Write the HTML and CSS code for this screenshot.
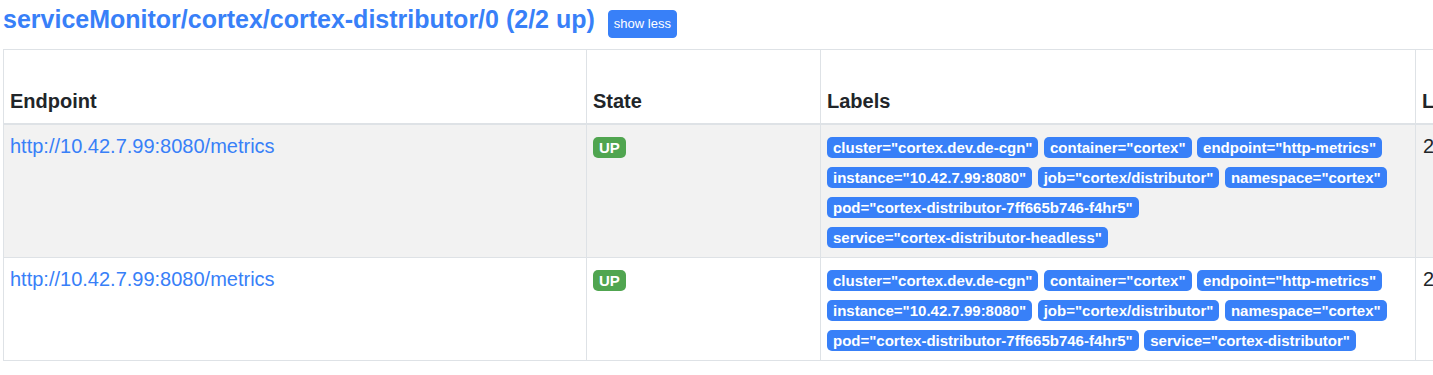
FILE: index.html
```html
<!DOCTYPE html>
<html lang="en">
<head>
    <meta charset="UTF-8">
    <meta name="viewport" content="width=device-width, initial-scale=1.0">
    <title>Targets</title>
    <link rel="stylesheet" href="styles.css">
</head>
<body>
    <div class="targets-page">
        <h2 class="pool-heading">
            <a href="#pool-cortex-distributor">serviceMonitor/cortex/cortex-distributor/0 (2/2 up)</a><button class="btn-xs" type="button">show less</button>
        </h2>
        <table class="targets-table">
            <colgroup>
                <col class="col-endpoint">
                <col class="col-state">
                <col class="col-labels">
                <col class="col-last">
                <col class="col-duration">
                <col class="col-error">
            </colgroup>
            <thead>
                <tr>
                    <th>Endpoint</th>
                    <th>State</th>
                    <th>Labels</th>
                    <th>Last Scrape</th>
                    <th>Scrape Duration</th>
                    <th>Error</th>
                </tr>
            </thead>
            <tbody>
                <tr class="striped">
                    <td><a href="#">http://10.42.7.99:8080/metrics</a></td>
                    <td><span class="badge badge-up">UP</span></td>
                    <td>
                        <span class="badge">cluster="cortex.dev.de-cgn"</span>
                        <span class="badge">container="cortex"</span>
                        <span class="badge">endpoint="http-metrics"</span>
                        <span class="badge">instance="10.42.7.99:8080"</span>
                        <span class="badge">job="cortex/distributor"</span>
                        <span class="badge">namespace="cortex"</span>
                        <span class="badge">pod="cortex-distributor-7ff665b746-f4hr5"</span>
                        <span class="badge">service="cortex-distributor-headless"</span>
                    </td>
                    <td>2.481s ago</td>
                    <td>4.512ms</td>
                    <td></td>
                </tr>
                <tr>
                    <td><a href="#">http://10.42.7.99:8080/metrics</a></td>
                    <td><span class="badge badge-up">UP</span></td>
                    <td>
                        <span class="badge">cluster="cortex.dev.de-cgn"</span>
                        <span class="badge">container="cortex"</span>
                        <span class="badge">endpoint="http-metrics"</span>
                        <span class="badge">instance="10.42.7.99:8080"</span>
                        <span class="badge">job="cortex/distributor"</span>
                        <span class="badge">namespace="cortex"</span>
                        <span class="badge">pod="cortex-distributor-7ff665b746-f4hr5"</span>
                        <span class="badge">service="cortex-distributor"</span>
                    </td>
                    <td>2.903s ago</td>
                    <td>3.877ms</td>
                    <td></td>
                </tr>
            </tbody>
        </table>
    </div>
</body>
</html>
```

FILE: styles.css
```css
html, body {
    margin: 0;
    padding: 0;
}
body {
    font-family: 'Liberation Sans', Arial, sans-serif;
    font-size: 20px;
    line-height: 1.5;
    color: #212529;
    background-color: #ffffff;
}
a {
    color: #3880f8;
    text-decoration: none;
}
.targets-page {
    padding-left: 3px;
    overflow: hidden;
}

/* Pool heading */
.pool-heading {
    font-size: 25px;
    font-weight: 700;
    line-height: 39px;
    margin: 0 0 10px;
    white-space: nowrap;
}
.btn-xs {
    margin-left: 13px;
    padding: 3px 5px;
    font-family: inherit;
    font-size: 13px;
    font-weight: 400;
    line-height: 20px;
    color: #ffffff;
    background-color: #3880f8;
    border: 1px solid #3880f8;
    border-radius: 4px;
    cursor: pointer;
}

/* Targets table */
.targets-table {
    border-collapse: collapse;
    table-layout: fixed;
    width: 1972px;
}
.col-endpoint { width: 583px; }
.col-state { width: 234px; }
.col-labels { width: 595px; }
.col-last { width: 150px; }
.col-duration { width: 110px; }
.col-error { width: 300px; }

.targets-table th,
.targets-table td {
    padding: 6px;
    border: 1px solid #dee2e6;
    text-align: left;
}
.targets-table th {
    padding-bottom: 7px;
    vertical-align: bottom;
    font-weight: 700;
    border-bottom-width: 2px;
}
.targets-table td {
    vertical-align: top;
}
.targets-table td:nth-child(4) {
    padding-left: 7px;
}
.targets-table tr.striped td {
    background-color: #f2f2f2;
}

.badge {
    display: inline-block;
    padding: 3px 6px;
    font-size: 15px;
    font-weight: 700;
    line-height: 1;
    color: #ffffff;
    white-space: nowrap;
    background-color: #3880f8;
    border-radius: 5px;
}
.badge-up {
    background-color: #50a550;
}
```
